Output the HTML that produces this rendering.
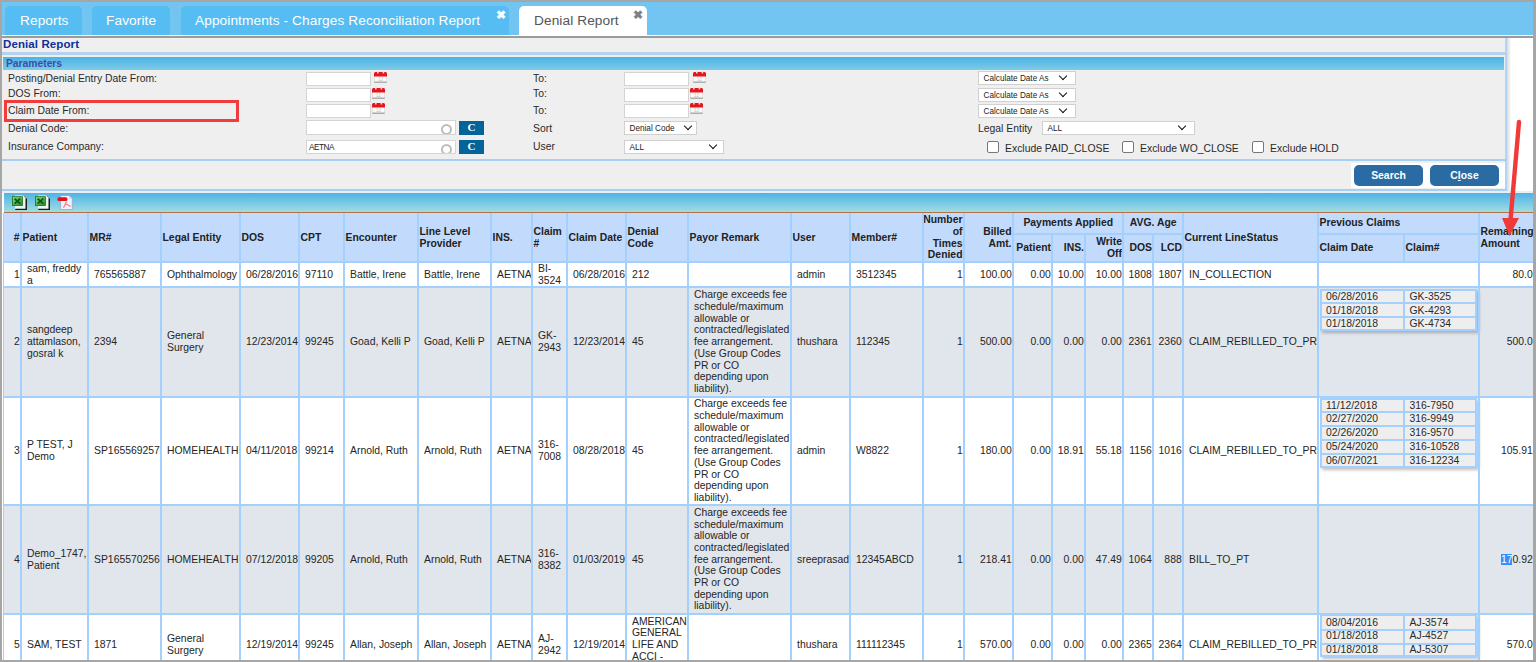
<!DOCTYPE html><html><head><meta charset="utf-8"><style>

*{box-sizing:border-box;margin:0;padding:0}
html,body{width:1536px;height:662px;overflow:hidden;background:#fff}
body{position:relative;font-family:"Liberation Sans",sans-serif;font-size:10.4px;color:#252525}
.a{position:absolute}
.lbl{position:absolute;line-height:12px;white-space:nowrap;color:#2a2a2a}
.inp{position:absolute;background:#fff;border:1px solid #d4d4d4}
.sel{position:absolute;background:#fff;border:1px solid #d0d0d0;font-size:8.2px;color:#222;line-height:14px;padding-left:4.5px;white-space:nowrap}
.chev{position:absolute;top:1px;width:6px;height:6px;border-right:1.8px solid #111;border-bottom:1.8px solid #111;transform:rotate(45deg)}
.cal{position:absolute;width:13px;height:13px}
.cb{position:absolute;width:12px;height:12px;border:1px solid #777;border-radius:2px;background:#fff}
.cbtn{position:absolute;width:25px;height:14px;background:#03649a;color:#fff;font-weight:bold;font-family:'Liberation Serif',serif;font-size:11px;line-height:13.6px;text-align:center}
.circ{position:absolute;width:11px;height:11px;border:2px solid #bdbdbd;border-radius:50%}
.btn{position:absolute;height:21px;background:#2a6ba3;border-radius:5px;color:#fff;font-weight:bold;font-size:10.4px;line-height:21px;text-align:center}
.tab{position:absolute;top:6px;height:29px;background:#55bdf2;border-radius:5px 5px 0 0;color:#fff;font-size:13.7px;line-height:29px;white-space:nowrap;letter-spacing:0.08px}
.hl{position:absolute;background:#a3d0fd}
.c{position:absolute;display:flex;align-items:center;overflow:hidden;line-height:11.7px}
.c>span{display:block}
.hd{font-weight:bold;color:#222;padding-top:1px}
.nt{position:absolute;background:#eee}

</style></head><body>
<div class="a" style="left:0;top:0;width:1536px;height:2px;background:#a6a6a6"></div>
<div class="a" style="left:0;top:0;width:2px;height:662px;background:#a6a6a6"></div>
<div class="a" style="left:1533px;top:0;width:3px;height:662px;background:#a6a6a6"></div>
<div class="a" style="left:0;top:660px;width:1536px;height:2px;background:#a6a6a6"></div>
<div class="a" style="left:2px;top:2px;width:1531px;height:33px;background:#72c5f1"></div>
<div class="a" style="left:2px;top:35px;width:1531px;height:1px;background:#fff"></div>
<div class="a" style="left:2px;top:36px;width:1531px;height:2px;background:#9b9b9b"></div>
<div class="tab" style="left:5px;width:77px;"><span style="position:absolute;left:15px">Reports</span></div>
<div class="tab" style="left:92px;width:78px;"><span style="position:absolute;left:14px">Favorite</span></div>
<div class="tab" style="left:181px;width:328px;"><span style="position:absolute;left:14px">Appointments - Charges Reconciliation Report</span><span style="position:absolute;left:315px;top:-5.5px;font-size:12px;font-weight:bold">&#10006;</span></div>
<div class="tab" style="left:519px;width:128px;background:#fff;color:#555"><span style="position:absolute;left:15px">Denial Report</span><span style="position:absolute;left:114px;top:-5.5px;font-size:12px;font-weight:bold;color:#808080">&#10006;</span></div>
<div class="a" style="left:2px;top:38px;width:1505px;height:155px;background:#efefef"></div>
<div class="a" style="left:1505px;top:38px;width:2px;height:153px;background:#b3d5f5"></div>
<div class="a" style="left:1507px;top:38px;width:4px;height:153px;background:linear-gradient(to right,#d8d8d8,#fff)"></div>
<div class="lbl" style="left:3px;top:37px;font-size:11.5px;font-weight:bold;color:#102f98;line-height:14px;letter-spacing:0.1px">Denial Report</div>
<div class="a" style="left:2px;top:52px;width:1505px;height:3px;background:#b5d2ee"></div>
<div class="a" style="left:3px;top:57px;width:1501px;height:13px;background:linear-gradient(#4cb2e6,#7dcbe7)"></div>
<div class="lbl" style="left:6px;top:57.6px;font-size:10.3px;font-weight:bold;color:#3b4ea6;line-height:12px">Parameters</div>
<div class="lbl" style="left:8px;top:72.5px">Posting/Denial Entry Date From:</div>
<div class="lbl" style="left:8px;top:88.3px">DOS From:</div>
<div class="lbl" style="left:8px;top:104.5px">Claim Date From:</div>
<div class="lbl" style="left:8px;top:122.8px">Denial Code:</div>
<div class="lbl" style="left:8px;top:140.9px">Insurance Company:</div>
<div class="a" style="left:4px;top:100px;width:235px;height:22px;border:3px solid #f03c3c"></div>
<div class="inp" style="left:306px;top:72px;width:65px;height:14px"></div>
<svg class="cal" style="left:374px;top:70.5px" width="13" height="12" viewBox="0 0 13 12"><rect x="0.3" y="3.5" width="12.4" height="7.5" fill="#fafafa" stroke="#d6d6d6" stroke-width="0.6"/><rect x="0.3" y="10" width="12.4" height="1.4" fill="#a8a8a8"/><path d="M0 5V2a1.5 1.5 0 0 1 1.5-1.5h10A1.5 1.5 0 0 1 13 2v3z" fill="#e4161c"/><rect x="3" y="0" width="1.6" height="2" fill="#f2d0d0"/><rect x="8.6" y="0" width="1.6" height="2" fill="#f2d0d0"/><text x="6.5" y="9.3" font-size="4.6" text-anchor="middle" fill="#c4c4c4" font-family="Liberation Sans">12</text></svg>
<div class="inp" style="left:306px;top:88px;width:65px;height:13.5px"></div>
<svg class="cal" style="left:372px;top:86.5px" width="13" height="12" viewBox="0 0 13 12"><rect x="0.3" y="3.5" width="12.4" height="7.5" fill="#fafafa" stroke="#d6d6d6" stroke-width="0.6"/><rect x="0.3" y="10" width="12.4" height="1.4" fill="#a8a8a8"/><path d="M0 5V2a1.5 1.5 0 0 1 1.5-1.5h10A1.5 1.5 0 0 1 13 2v3z" fill="#e4161c"/><rect x="3" y="0" width="1.6" height="2" fill="#f2d0d0"/><rect x="8.6" y="0" width="1.6" height="2" fill="#f2d0d0"/><text x="6.5" y="9.3" font-size="4.6" text-anchor="middle" fill="#c4c4c4" font-family="Liberation Sans">12</text></svg>
<div class="inp" style="left:306px;top:104px;width:65px;height:13.5px"></div>
<svg class="cal" style="left:372px;top:102px" width="13" height="12" viewBox="0 0 13 12"><rect x="0.3" y="3.5" width="12.4" height="7.5" fill="#fafafa" stroke="#d6d6d6" stroke-width="0.6"/><rect x="0.3" y="10" width="12.4" height="1.4" fill="#a8a8a8"/><path d="M0 5V2a1.5 1.5 0 0 1 1.5-1.5h10A1.5 1.5 0 0 1 13 2v3z" fill="#e4161c"/><rect x="3" y="0" width="1.6" height="2" fill="#f2d0d0"/><rect x="8.6" y="0" width="1.6" height="2" fill="#f2d0d0"/><text x="6.5" y="9.3" font-size="4.6" text-anchor="middle" fill="#c4c4c4" font-family="Liberation Sans">12</text></svg>
<div class="inp" style="left:306px;top:120px;width:150px;height:15px;overflow:hidden"><div class="circ" style="left:134px;top:3.2px"></div></div>
<div class="cbtn" style="left:459px;top:121px">C</div>
<div class="inp" style="left:306px;top:140px;width:150px;height:14px;overflow:hidden"><div class="circ" style="left:134px;top:3.2px"></div></div>
<div class="lbl" style="left:309px;top:141.5px;font-size:8.2px;color:#222;letter-spacing:-0.45px">AETNA</div>
<div class="cbtn" style="left:459px;top:140px">C</div>
<div class="lbl" style="left:533px;top:72.5px">To:</div>
<div class="lbl" style="left:533px;top:88.3px">To:</div>
<div class="lbl" style="left:533px;top:104.5px">To:</div>
<div class="lbl" style="left:533px;top:122.8px">Sort</div>
<div class="lbl" style="left:533px;top:140.9px">User</div>
<div class="inp" style="left:624px;top:72px;width:65px;height:14px"></div>
<svg class="cal" style="left:693px;top:70.5px" width="13" height="12" viewBox="0 0 13 12"><rect x="0.3" y="3.5" width="12.4" height="7.5" fill="#fafafa" stroke="#d6d6d6" stroke-width="0.6"/><rect x="0.3" y="10" width="12.4" height="1.4" fill="#a8a8a8"/><path d="M0 5V2a1.5 1.5 0 0 1 1.5-1.5h10A1.5 1.5 0 0 1 13 2v3z" fill="#e4161c"/><rect x="3" y="0" width="1.6" height="2" fill="#f2d0d0"/><rect x="8.6" y="0" width="1.6" height="2" fill="#f2d0d0"/><text x="6.5" y="9.3" font-size="4.6" text-anchor="middle" fill="#c4c4c4" font-family="Liberation Sans">12</text></svg>
<div class="inp" style="left:624px;top:88px;width:65px;height:13.5px"></div>
<svg class="cal" style="left:689.5px;top:86.5px" width="13" height="12" viewBox="0 0 13 12"><rect x="0.3" y="3.5" width="12.4" height="7.5" fill="#fafafa" stroke="#d6d6d6" stroke-width="0.6"/><rect x="0.3" y="10" width="12.4" height="1.4" fill="#a8a8a8"/><path d="M0 5V2a1.5 1.5 0 0 1 1.5-1.5h10A1.5 1.5 0 0 1 13 2v3z" fill="#e4161c"/><rect x="3" y="0" width="1.6" height="2" fill="#f2d0d0"/><rect x="8.6" y="0" width="1.6" height="2" fill="#f2d0d0"/><text x="6.5" y="9.3" font-size="4.6" text-anchor="middle" fill="#c4c4c4" font-family="Liberation Sans">12</text></svg>
<div class="inp" style="left:624px;top:104px;width:65px;height:13.5px"></div>
<svg class="cal" style="left:689.5px;top:102px" width="13" height="12" viewBox="0 0 13 12"><rect x="0.3" y="3.5" width="12.4" height="7.5" fill="#fafafa" stroke="#d6d6d6" stroke-width="0.6"/><rect x="0.3" y="10" width="12.4" height="1.4" fill="#a8a8a8"/><path d="M0 5V2a1.5 1.5 0 0 1 1.5-1.5h10A1.5 1.5 0 0 1 13 2v3z" fill="#e4161c"/><rect x="3" y="0" width="1.6" height="2" fill="#f2d0d0"/><rect x="8.6" y="0" width="1.6" height="2" fill="#f2d0d0"/><text x="6.5" y="9.3" font-size="4.6" text-anchor="middle" fill="#c4c4c4" font-family="Liberation Sans">12</text></svg>
<div class="sel" style="left:624px;top:121px;width:73px;height:14px">Denial Code<div class="chev" style="left:60px"></div></div>
<div class="sel" style="left:624px;top:140px;width:100px;height:14px">ALL<div class="chev" style="left:85px"></div></div>
<div class="sel" style="left:978px;top:71px;width:98px;height:14px">Calculate Date As<div class="chev" style="left:81px"></div></div>
<div class="sel" style="left:978px;top:88px;width:98px;height:14px">Calculate Date As<div class="chev" style="left:81px"></div></div>
<div class="sel" style="left:978px;top:104px;width:98px;height:14px">Calculate Date As<div class="chev" style="left:81px"></div></div>
<div class="lbl" style="left:978px;top:122.8px">Legal Entity</div>
<div class="sel" style="left:1042px;top:121px;width:153px;height:14px">ALL<div class="chev" style="left:136px"></div></div>
<div class="cb" style="left:987px;top:141px"></div>
<div class="lbl" style="left:1005px;top:143.2px">Exclude PAID_CLOSE</div>
<div class="cb" style="left:1122px;top:141px"></div>
<div class="lbl" style="left:1140px;top:143.2px">Exclude WO_CLOSE</div>
<div class="cb" style="left:1252px;top:141px"></div>
<div class="lbl" style="left:1270px;top:143.2px">Exclude HOLD</div>
<div class="a" style="left:2px;top:159px;width:1505px;height:2px;background:#a5cff5"></div>
<div class="a" style="left:1351px;top:163px;width:154px;height:25px;background:#fff"></div>
<div class="btn" style="left:1354px;top:165px;width:69px">Search</div>
<div class="btn" style="left:1430px;top:165px;width:69px">C<u style="text-decoration-thickness:1px">l</u>ose</div>
<div class="a" style="left:2px;top:189px;width:1505px;height:2px;background:#a5cff5"></div>
<div class="a" style="left:2px;top:191px;width:1531px;height:2px;background:#e9eef4"></div>
<div class="a" style="left:4px;top:193px;width:1529px;height:19px;background:linear-gradient(#4fb3e7,#a0dde0)"></div>
<div class="a" style="left:4px;top:212px;width:1529px;height:1px;background:#b46f45"></div>
<svg class="a" style="left:12px;top:194.5px" width="15" height="15" viewBox="0 0 15 15"><defs><linearGradient id="gx" x1="0" y1="0" x2="1" y2="1"><stop offset="0" stop-color="#8de08a"/><stop offset="1" stop-color="#1b8a26"/></linearGradient></defs><path d="M3 0.5h8.5l3 3v11H3z" fill="#eef5ea"/><path d="M14.3 3.3v11.2H3.2" fill="none" stroke="#1d1d1d" stroke-width="1.6"/><path d="M11.5 0.5l3 3" stroke="#777" stroke-width="0.8"/><rect x="0.4" y="1.7" width="10" height="8.8" fill="url(#gx)" stroke="#17701c" stroke-width="0.8"/><path d="M2.6 3.6l5.6 5M8.2 3.6l-5.6 5" stroke="#0b5a10" stroke-width="1.9"/></svg>
<svg class="a" style="left:35px;top:194.5px" width="15" height="15" viewBox="0 0 15 15"><defs><linearGradient id="gx" x1="0" y1="0" x2="1" y2="1"><stop offset="0" stop-color="#8de08a"/><stop offset="1" stop-color="#1b8a26"/></linearGradient></defs><path d="M3 0.5h8.5l3 3v11H3z" fill="#eef5ea"/><path d="M14.3 3.3v11.2H3.2" fill="none" stroke="#1d1d1d" stroke-width="1.6"/><path d="M11.5 0.5l3 3" stroke="#777" stroke-width="0.8"/><rect x="0.4" y="1.7" width="10" height="8.8" fill="url(#gx)" stroke="#17701c" stroke-width="0.8"/><path d="M2.6 3.6l5.6 5M8.2 3.6l-5.6 5" stroke="#0b5a10" stroke-width="1.9"/></svg>
<svg class="a" style="left:57px;top:194.5px" width="16" height="15" viewBox="0 0 16 15"><path d="M3.6 0.5h8.9l2.8 2.8v11.2H3.6z" fill="#eef2fb" stroke="#93a6d4" stroke-width="0.8"/><path d="M12.5 0.5v2.8h2.8" fill="none" stroke="#b0bde0" stroke-width="0.6"/><path d="M9.5 6.5L6.5 12.8M8.3 8.8l5.5 2.6" stroke="#f07a7a" stroke-width="1.1" fill="none"/><rect x="0.4" y="2.3" width="10" height="3.8" rx="1.6" fill="#e0121a"/></svg>
<div class="a" style="left:3px;top:213px;width:1530px;height:48px;background:#c2dbfd"></div>
<div class="a" style="left:3px;top:263px;width:1530px;height:23px;background:#fff"></div>
<div class="a" style="left:3px;top:288px;width:1530px;height:108px;background:#e1e5ec"></div>
<div class="a" style="left:3px;top:398px;width:1530px;height:106px;background:#fff"></div>
<div class="a" style="left:3px;top:506px;width:1530px;height:107px;background:#e1e5ec"></div>
<div class="a" style="left:3px;top:615px;width:1530px;height:60px;background:#fff"></div>
<div class="c hd" style="left:5px;top:213px;width:15px;height:48px;justify-content:flex-end;text-align:right;padding-left:0px;padding-right:0.5px;"><span>#</span></div>
<div class="c hd" style="left:22px;top:213px;width:65px;height:48px;justify-content:flex-start;text-align:left;padding-left:0.5px;padding-right:0.5px;"><span>Patient</span></div>
<div class="c hd" style="left:89px;top:213px;width:71px;height:48px;justify-content:flex-start;text-align:left;padding-left:0.5px;padding-right:0.5px;"><span>MR#</span></div>
<div class="c hd" style="left:162px;top:213px;width:77px;height:48px;justify-content:flex-start;text-align:left;padding-left:0.5px;padding-right:0.5px;"><span>Legal Entity</span></div>
<div class="c hd" style="left:241px;top:213px;width:57px;height:48px;justify-content:flex-start;text-align:left;padding-left:0.5px;padding-right:0.5px;"><span>DOS</span></div>
<div class="c hd" style="left:300px;top:213px;width:43px;height:48px;justify-content:flex-start;text-align:left;padding-left:0.5px;padding-right:0.5px;"><span>CPT</span></div>
<div class="c hd" style="left:345px;top:213px;width:72px;height:48px;justify-content:flex-start;text-align:left;padding-left:0.5px;padding-right:0.5px;"><span>Encounter</span></div>
<div class="c hd" style="left:419px;top:213px;width:71px;height:48px;justify-content:flex-start;text-align:left;padding-left:0.5px;padding-right:0.5px;"><span>Line Level<br>Provider</span></div>
<div class="c hd" style="left:492px;top:213px;width:39px;height:48px;justify-content:flex-start;text-align:left;padding-left:0.5px;padding-right:0.5px;"><span>INS.</span></div>
<div class="c hd" style="left:533px;top:213px;width:33px;height:48px;justify-content:flex-start;text-align:left;padding-left:0.5px;padding-right:0.5px;"><span>Claim<br>#</span></div>
<div class="c hd" style="left:568px;top:213px;width:57px;height:48px;justify-content:flex-start;text-align:left;padding-left:0.5px;padding-right:0.5px;"><span>Claim Date</span></div>
<div class="c hd" style="left:627px;top:213px;width:60px;height:48px;justify-content:flex-start;text-align:left;padding-left:0.5px;padding-right:0.5px;"><span>Denial<br>Code</span></div>
<div class="c hd" style="left:689px;top:213px;width:101px;height:48px;justify-content:flex-start;text-align:left;padding-left:0.5px;padding-right:0.5px;"><span>Payor Remark</span></div>
<div class="c hd" style="left:792px;top:213px;width:57px;height:48px;justify-content:flex-start;text-align:left;padding-left:0.5px;padding-right:0.5px;"><span>User</span></div>
<div class="c hd" style="left:851px;top:213px;width:71px;height:48px;justify-content:flex-start;text-align:left;padding-left:0.5px;padding-right:0.5px;"><span>Member#</span></div>
<div class="c hd" style="left:924px;top:213px;width:39px;height:48px;justify-content:flex-end;text-align:right;padding-left:0px;padding-right:0.5px;"><span>Number<br>of<br>Times<br>Denied</span></div>
<div class="c hd" style="left:965px;top:213px;width:47px;height:48px;justify-content:flex-end;text-align:right;padding-left:0px;padding-right:0.5px;"><span>Billed<br>Amt.</span></div>
<div class="c hd" style="left:1184px;top:213px;width:133px;height:48px;justify-content:flex-start;text-align:left;padding-left:0.5px;padding-right:0.5px;"><span>Current Line<span style="word-spacing:-2.6px"> </span>Status</span></div>
<div class="c hd" style="left:1480px;top:213px;width:60px;height:48px;justify-content:flex-start;text-align:left;padding-left:0.5px;padding-right:0.5px;"><span>Remaining<br>Amount</span></div>
<div class="c hd" style="left:1014px;top:213px;width:108px;height:20px;justify-content:center;text-align:center;padding-left:0.5px;padding-right:0px;padding-top:0.3px"><span>Payments Applied</span></div>
<div class="hl" style="left:1012px;top:233px;width:112px;height:2px"></div>
<div class="c hd" style="left:1124px;top:213px;width:58px;height:20px;justify-content:center;text-align:center;padding-left:0.5px;padding-right:0px;padding-top:0.3px"><span>AVG. Age</span></div>
<div class="hl" style="left:1122px;top:233px;width:62px;height:2px"></div>
<div class="c hd" style="left:1319px;top:213px;width:159px;height:20px;justify-content:flex-start;text-align:left;padding-left:0.5px;padding-right:0px;padding-top:0.3px"><span>Previous Claims</span></div>
<div class="hl" style="left:1317px;top:233px;width:163px;height:2px"></div>
<div class="c hd" style="left:1014px;top:235px;width:37px;height:26px;justify-content:flex-end;text-align:right;padding-left:0.5px;padding-right:0px;padding-top:0"><span>Patient</span></div>
<div class="c hd" style="left:1053px;top:235px;width:31px;height:26px;justify-content:flex-end;text-align:right;padding-left:0.5px;padding-right:0px;padding-top:0"><span>INS.</span></div>
<div class="c hd" style="left:1086px;top:235px;width:36px;height:26px;justify-content:flex-end;text-align:right;padding-left:0.5px;padding-right:0px;padding-top:0"><span>Write<br>Off</span></div>
<div class="c hd" style="left:1124px;top:235px;width:28px;height:26px;justify-content:flex-end;text-align:right;padding-left:0.5px;padding-right:0px;padding-top:0"><span>DOS</span></div>
<div class="c hd" style="left:1154px;top:235px;width:28px;height:26px;justify-content:flex-end;text-align:right;padding-left:0.5px;padding-right:0px;padding-top:0"><span>LCD</span></div>
<div class="c hd" style="left:1319px;top:235px;width:84px;height:26px;justify-content:flex-start;text-align:left;padding-left:0.5px;padding-right:0px;padding-top:0"><span>Claim Date</span></div>
<div class="c hd" style="left:1405px;top:235px;width:73px;height:26px;justify-content:flex-start;text-align:left;padding-left:0.5px;padding-right:0px;padding-top:0"><span>Claim#</span></div>
<div class="c " style="left:5px;top:263px;width:15px;height:23px;justify-content:flex-end;text-align:right;padding-left:0px;padding-right:0.3px;"><span>1</span></div>
<div class="c " style="left:22px;top:263px;width:65px;height:23px;justify-content:flex-start;text-align:left;padding-left:5px;padding-right:0.3px;"><span>sam, freddy<br>a</span></div>
<div class="c " style="left:89px;top:263px;width:71px;height:23px;justify-content:flex-start;text-align:left;padding-left:5px;padding-right:0.3px;"><span>765565887</span></div>
<div class="c " style="left:162px;top:263px;width:77px;height:23px;justify-content:flex-start;text-align:left;padding-left:5px;padding-right:0.3px;"><span>Ophthalmology</span></div>
<div class="c " style="left:241px;top:263px;width:57px;height:23px;justify-content:flex-start;text-align:left;padding-left:5px;padding-right:0.3px;"><span>06/28/2016</span></div>
<div class="c " style="left:300px;top:263px;width:43px;height:23px;justify-content:flex-start;text-align:left;padding-left:5px;padding-right:0.3px;"><span>97110</span></div>
<div class="c " style="left:345px;top:263px;width:72px;height:23px;justify-content:flex-start;text-align:left;padding-left:5px;padding-right:0.3px;"><span>Battle, Irene</span></div>
<div class="c " style="left:419px;top:263px;width:71px;height:23px;justify-content:flex-start;text-align:left;padding-left:5px;padding-right:0.3px;"><span>Battle, Irene</span></div>
<div class="c " style="left:492px;top:263px;width:39px;height:23px;justify-content:flex-start;text-align:left;padding-left:5px;padding-right:0.3px;"><span>AETNA</span></div>
<div class="c " style="left:533px;top:263px;width:33px;height:23px;justify-content:flex-start;text-align:left;padding-left:5px;padding-right:0.3px;"><span>BI-<br>3524</span></div>
<div class="c " style="left:568px;top:263px;width:57px;height:23px;justify-content:flex-start;text-align:left;padding-left:5px;padding-right:0.3px;"><span>06/28/2016</span></div>
<div class="c " style="left:627px;top:263px;width:60px;height:23px;justify-content:flex-start;text-align:left;padding-left:5px;padding-right:0.3px;"><span>212</span></div>
<div class="c " style="left:792px;top:263px;width:57px;height:23px;justify-content:flex-start;text-align:left;padding-left:5px;padding-right:0.3px;"><span>admin</span></div>
<div class="c " style="left:851px;top:263px;width:71px;height:23px;justify-content:flex-start;text-align:left;padding-left:5px;padding-right:0.3px;"><span>3512345</span></div>
<div class="c " style="left:924px;top:263px;width:39px;height:23px;justify-content:flex-end;text-align:right;padding-left:0px;padding-right:0.3px;"><span>1</span></div>
<div class="c " style="left:965px;top:263px;width:47px;height:23px;justify-content:flex-end;text-align:right;padding-left:0px;padding-right:0.3px;"><span>100.00</span></div>
<div class="c " style="left:1014px;top:263px;width:37px;height:23px;justify-content:flex-end;text-align:right;padding-left:0px;padding-right:0.3px;"><span>0.00</span></div>
<div class="c " style="left:1053px;top:263px;width:31px;height:23px;justify-content:flex-end;text-align:right;padding-left:0px;padding-right:0.3px;"><span>10.00</span></div>
<div class="c " style="left:1086px;top:263px;width:36px;height:23px;justify-content:flex-end;text-align:right;padding-left:0px;padding-right:0.3px;"><span>10.00</span></div>
<div class="c " style="left:1124px;top:263px;width:28px;height:23px;justify-content:flex-end;text-align:right;padding-left:0px;padding-right:0.3px;"><span>1808</span></div>
<div class="c " style="left:1154px;top:263px;width:28px;height:23px;justify-content:flex-end;text-align:right;padding-left:0px;padding-right:0.3px;"><span>1807</span></div>
<div class="c " style="left:1184px;top:263px;width:133px;height:23px;justify-content:flex-start;text-align:left;padding-left:5px;padding-right:0.3px;"><span>IN_COLLECTION</span></div>
<div class="c " style="left:1480px;top:263px;width:53px;height:23px;justify-content:flex-end;text-align:right;padding-left:0px;padding-right:0.3px;"><span>80.0</span></div>
<div class="c " style="left:5px;top:288px;width:15px;height:108px;justify-content:flex-end;text-align:right;padding-left:0px;padding-right:0.3px;"><span>2</span></div>
<div class="c " style="left:22px;top:288px;width:65px;height:108px;justify-content:flex-start;text-align:left;padding-left:5px;padding-right:0.3px;"><span>sangdeep<br>attamlason,<br>gosral k</span></div>
<div class="c " style="left:89px;top:288px;width:71px;height:108px;justify-content:flex-start;text-align:left;padding-left:5px;padding-right:0.3px;"><span>2394</span></div>
<div class="c " style="left:162px;top:288px;width:77px;height:108px;justify-content:flex-start;text-align:left;padding-left:5px;padding-right:0.3px;"><span>General<br>Surgery</span></div>
<div class="c " style="left:241px;top:288px;width:57px;height:108px;justify-content:flex-start;text-align:left;padding-left:5px;padding-right:0.3px;"><span>12/23/2014</span></div>
<div class="c " style="left:300px;top:288px;width:43px;height:108px;justify-content:flex-start;text-align:left;padding-left:5px;padding-right:0.3px;"><span>99245</span></div>
<div class="c " style="left:345px;top:288px;width:72px;height:108px;justify-content:flex-start;text-align:left;padding-left:5px;padding-right:0.3px;"><span>Goad, Kelli P</span></div>
<div class="c " style="left:419px;top:288px;width:71px;height:108px;justify-content:flex-start;text-align:left;padding-left:5px;padding-right:0.3px;"><span>Goad, Kelli P</span></div>
<div class="c " style="left:492px;top:288px;width:39px;height:108px;justify-content:flex-start;text-align:left;padding-left:5px;padding-right:0.3px;"><span>AETNA</span></div>
<div class="c " style="left:533px;top:288px;width:33px;height:108px;justify-content:flex-start;text-align:left;padding-left:5px;padding-right:0.3px;"><span>GK-<br>2943</span></div>
<div class="c " style="left:568px;top:288px;width:57px;height:108px;justify-content:flex-start;text-align:left;padding-left:5px;padding-right:0.3px;"><span>12/23/2014</span></div>
<div class="c " style="left:627px;top:288px;width:60px;height:108px;justify-content:flex-start;text-align:left;padding-left:5px;padding-right:0.3px;"><span>45</span></div>
<div class="c " style="left:689px;top:288px;width:101px;height:108px;justify-content:flex-start;text-align:left;padding-left:5px;padding-right:0.3px;"><span>Charge exceeds fee<br>schedule/maximum<br>allowable or<br>contracted/legislated<br>fee arrangement.<br>(Use Group Codes<br>PR or CO<br>depending upon<br>liability).</span></div>
<div class="c " style="left:792px;top:288px;width:57px;height:108px;justify-content:flex-start;text-align:left;padding-left:5px;padding-right:0.3px;"><span>thushara</span></div>
<div class="c " style="left:851px;top:288px;width:71px;height:108px;justify-content:flex-start;text-align:left;padding-left:5px;padding-right:0.3px;"><span>112345</span></div>
<div class="c " style="left:924px;top:288px;width:39px;height:108px;justify-content:flex-end;text-align:right;padding-left:0px;padding-right:0.3px;"><span>1</span></div>
<div class="c " style="left:965px;top:288px;width:47px;height:108px;justify-content:flex-end;text-align:right;padding-left:0px;padding-right:0.3px;"><span>500.00</span></div>
<div class="c " style="left:1014px;top:288px;width:37px;height:108px;justify-content:flex-end;text-align:right;padding-left:0px;padding-right:0.3px;"><span>0.00</span></div>
<div class="c " style="left:1053px;top:288px;width:31px;height:108px;justify-content:flex-end;text-align:right;padding-left:0px;padding-right:0.3px;"><span>0.00</span></div>
<div class="c " style="left:1086px;top:288px;width:36px;height:108px;justify-content:flex-end;text-align:right;padding-left:0px;padding-right:0.3px;"><span>0.00</span></div>
<div class="c " style="left:1124px;top:288px;width:28px;height:108px;justify-content:flex-end;text-align:right;padding-left:0px;padding-right:0.3px;"><span>2361</span></div>
<div class="c " style="left:1154px;top:288px;width:28px;height:108px;justify-content:flex-end;text-align:right;padding-left:0px;padding-right:0.3px;"><span>2360</span></div>
<div class="c " style="left:1184px;top:288px;width:133px;height:108px;justify-content:flex-start;text-align:left;padding-left:5px;padding-right:0.3px;"><span>CLAIM_REBILLED_TO_PR</span></div>
<div class="c " style="left:1480px;top:288px;width:53px;height:108px;justify-content:flex-end;text-align:right;padding-left:0px;padding-right:0.3px;"><span>500.0</span></div>
<div class="a" style="left:1320px;top:289px;width:157px;height:41.60000000000002px;background:#eee;border:2px solid #a3d0fd;box-shadow:2px 2px 3px rgba(0,0,0,0.25)"></div>
<div class="a" style="left:1403px;top:289px;width:2px;height:41.60000000000002px;background:#a3d0fd"></div>
<div class="a" style="left:1320px;top:302.4px;width:157px;height:2px;background:#a3d0fd"></div>
<div class="a" style="left:1320px;top:316px;width:157px;height:2px;background:#a3d0fd"></div>
<div class="lbl" style="left:1326px;top:291.1px;line-height:12px">06/28/2016</div>
<div class="lbl" style="left:1409.5px;top:291.1px;line-height:12px">GK-3525</div>
<div class="lbl" style="left:1326px;top:304.6px;line-height:12px">01/18/2018</div>
<div class="lbl" style="left:1409.5px;top:304.6px;line-height:12px">GK-4293</div>
<div class="lbl" style="left:1326px;top:318.1px;line-height:12px">01/18/2018</div>
<div class="lbl" style="left:1409.5px;top:318.1px;line-height:12px">GK-4734</div>
<div class="c " style="left:5px;top:398px;width:15px;height:106px;justify-content:flex-end;text-align:right;padding-left:0px;padding-right:0.3px;"><span>3</span></div>
<div class="c " style="left:22px;top:398px;width:65px;height:106px;justify-content:flex-start;text-align:left;padding-left:5px;padding-right:0.3px;"><span>P TEST, J<br>Demo</span></div>
<div class="c " style="left:89px;top:398px;width:71px;height:106px;justify-content:flex-start;text-align:left;padding-left:5px;padding-right:0.3px;"><span>SP165569257</span></div>
<div class="c " style="left:162px;top:398px;width:77px;height:106px;justify-content:flex-start;text-align:left;padding-left:5px;padding-right:0.3px;"><span>HOMEHEALTH</span></div>
<div class="c " style="left:241px;top:398px;width:57px;height:106px;justify-content:flex-start;text-align:left;padding-left:5px;padding-right:0.3px;"><span>04/11/2018</span></div>
<div class="c " style="left:300px;top:398px;width:43px;height:106px;justify-content:flex-start;text-align:left;padding-left:5px;padding-right:0.3px;"><span>99214</span></div>
<div class="c " style="left:345px;top:398px;width:72px;height:106px;justify-content:flex-start;text-align:left;padding-left:5px;padding-right:0.3px;"><span>Arnold, Ruth</span></div>
<div class="c " style="left:419px;top:398px;width:71px;height:106px;justify-content:flex-start;text-align:left;padding-left:5px;padding-right:0.3px;"><span>Arnold, Ruth</span></div>
<div class="c " style="left:492px;top:398px;width:39px;height:106px;justify-content:flex-start;text-align:left;padding-left:5px;padding-right:0.3px;"><span>AETNA</span></div>
<div class="c " style="left:533px;top:398px;width:33px;height:106px;justify-content:flex-start;text-align:left;padding-left:5px;padding-right:0.3px;"><span>316-<br>7008</span></div>
<div class="c " style="left:568px;top:398px;width:57px;height:106px;justify-content:flex-start;text-align:left;padding-left:5px;padding-right:0.3px;"><span>08/28/2018</span></div>
<div class="c " style="left:627px;top:398px;width:60px;height:106px;justify-content:flex-start;text-align:left;padding-left:5px;padding-right:0.3px;"><span>45</span></div>
<div class="c " style="left:689px;top:398px;width:101px;height:106px;justify-content:flex-start;text-align:left;padding-left:5px;padding-right:0.3px;"><span>Charge exceeds fee<br>schedule/maximum<br>allowable or<br>contracted/legislated<br>fee arrangement.<br>(Use Group Codes<br>PR or CO<br>depending upon<br>liability).</span></div>
<div class="c " style="left:792px;top:398px;width:57px;height:106px;justify-content:flex-start;text-align:left;padding-left:5px;padding-right:0.3px;"><span>admin</span></div>
<div class="c " style="left:851px;top:398px;width:71px;height:106px;justify-content:flex-start;text-align:left;padding-left:5px;padding-right:0.3px;"><span>W8822</span></div>
<div class="c " style="left:924px;top:398px;width:39px;height:106px;justify-content:flex-end;text-align:right;padding-left:0px;padding-right:0.3px;"><span>1</span></div>
<div class="c " style="left:965px;top:398px;width:47px;height:106px;justify-content:flex-end;text-align:right;padding-left:0px;padding-right:0.3px;"><span>180.00</span></div>
<div class="c " style="left:1014px;top:398px;width:37px;height:106px;justify-content:flex-end;text-align:right;padding-left:0px;padding-right:0.3px;"><span>0.00</span></div>
<div class="c " style="left:1053px;top:398px;width:31px;height:106px;justify-content:flex-end;text-align:right;padding-left:0px;padding-right:0.3px;"><span>18.91</span></div>
<div class="c " style="left:1086px;top:398px;width:36px;height:106px;justify-content:flex-end;text-align:right;padding-left:0px;padding-right:0.3px;"><span>55.18</span></div>
<div class="c " style="left:1124px;top:398px;width:28px;height:106px;justify-content:flex-end;text-align:right;padding-left:0px;padding-right:0.3px;"><span>1156</span></div>
<div class="c " style="left:1154px;top:398px;width:28px;height:106px;justify-content:flex-end;text-align:right;padding-left:0px;padding-right:0.3px;"><span>1016</span></div>
<div class="c " style="left:1184px;top:398px;width:133px;height:106px;justify-content:flex-start;text-align:left;padding-left:5px;padding-right:0.3px;"><span>CLAIM_REBILLED_TO_PR</span></div>
<div class="c " style="left:1480px;top:398px;width:53px;height:106px;justify-content:flex-end;text-align:right;padding-left:0px;padding-right:0.3px;"><span>105.91</span></div>
<div class="a" style="left:1320px;top:398px;width:157px;height:70px;background:#eee;border:2px solid #a3d0fd;box-shadow:2px 2px 3px rgba(0,0,0,0.25)"></div>
<div class="a" style="left:1403px;top:398px;width:2px;height:70px;background:#a3d0fd"></div>
<div class="a" style="left:1320px;top:411px;width:157px;height:2px;background:#a3d0fd"></div>
<div class="a" style="left:1320px;top:424.6px;width:157px;height:2px;background:#a3d0fd"></div>
<div class="a" style="left:1320px;top:439.2px;width:157px;height:2px;background:#a3d0fd"></div>
<div class="a" style="left:1320px;top:452.8px;width:157px;height:2px;background:#a3d0fd"></div>
<div class="lbl" style="left:1326px;top:399.6px;line-height:12px">11/12/2018</div>
<div class="lbl" style="left:1409.5px;top:399.6px;line-height:12px">316-7950</div>
<div class="lbl" style="left:1326px;top:413.2px;line-height:12px">02/27/2020</div>
<div class="lbl" style="left:1409.5px;top:413.2px;line-height:12px">316-9949</div>
<div class="lbl" style="left:1326px;top:426.8px;line-height:12px">02/26/2020</div>
<div class="lbl" style="left:1409.5px;top:426.8px;line-height:12px">316-9570</div>
<div class="lbl" style="left:1326px;top:441.1px;line-height:12px">05/24/2020</div>
<div class="lbl" style="left:1409.5px;top:441.1px;line-height:12px">316-10528</div>
<div class="lbl" style="left:1326px;top:454.7px;line-height:12px">06/07/2021</div>
<div class="lbl" style="left:1409.5px;top:454.7px;line-height:12px">316-12234</div>
<div class="c " style="left:5px;top:506px;width:15px;height:107px;justify-content:flex-end;text-align:right;padding-left:0px;padding-right:0.3px;"><span>4</span></div>
<div class="c " style="left:22px;top:506px;width:65px;height:107px;justify-content:flex-start;text-align:left;padding-left:5px;padding-right:0.3px;"><span>Demo_1747,<br>Patient</span></div>
<div class="c " style="left:89px;top:506px;width:71px;height:107px;justify-content:flex-start;text-align:left;padding-left:5px;padding-right:0.3px;"><span>SP165570256</span></div>
<div class="c " style="left:162px;top:506px;width:77px;height:107px;justify-content:flex-start;text-align:left;padding-left:5px;padding-right:0.3px;"><span>HOMEHEALTH</span></div>
<div class="c " style="left:241px;top:506px;width:57px;height:107px;justify-content:flex-start;text-align:left;padding-left:5px;padding-right:0.3px;"><span>07/12/2018</span></div>
<div class="c " style="left:300px;top:506px;width:43px;height:107px;justify-content:flex-start;text-align:left;padding-left:5px;padding-right:0.3px;"><span>99205</span></div>
<div class="c " style="left:345px;top:506px;width:72px;height:107px;justify-content:flex-start;text-align:left;padding-left:5px;padding-right:0.3px;"><span>Arnold, Ruth</span></div>
<div class="c " style="left:419px;top:506px;width:71px;height:107px;justify-content:flex-start;text-align:left;padding-left:5px;padding-right:0.3px;"><span>Arnold, Ruth</span></div>
<div class="c " style="left:492px;top:506px;width:39px;height:107px;justify-content:flex-start;text-align:left;padding-left:5px;padding-right:0.3px;"><span>AETNA</span></div>
<div class="c " style="left:533px;top:506px;width:33px;height:107px;justify-content:flex-start;text-align:left;padding-left:5px;padding-right:0.3px;"><span>316-<br>8382</span></div>
<div class="c " style="left:568px;top:506px;width:57px;height:107px;justify-content:flex-start;text-align:left;padding-left:5px;padding-right:0.3px;"><span>01/03/2019</span></div>
<div class="c " style="left:627px;top:506px;width:60px;height:107px;justify-content:flex-start;text-align:left;padding-left:5px;padding-right:0.3px;"><span>45</span></div>
<div class="c " style="left:689px;top:506px;width:101px;height:107px;justify-content:flex-start;text-align:left;padding-left:5px;padding-right:0.3px;"><span>Charge exceeds fee<br>schedule/maximum<br>allowable or<br>contracted/legislated<br>fee arrangement.<br>(Use Group Codes<br>PR or CO<br>depending upon<br>liability).</span></div>
<div class="c " style="left:792px;top:506px;width:57px;height:107px;justify-content:flex-start;text-align:left;padding-left:5px;padding-right:0.3px;"><span>sreeprasad</span></div>
<div class="c " style="left:851px;top:506px;width:71px;height:107px;justify-content:flex-start;text-align:left;padding-left:5px;padding-right:0.3px;"><span>12345ABCD</span></div>
<div class="c " style="left:924px;top:506px;width:39px;height:107px;justify-content:flex-end;text-align:right;padding-left:0px;padding-right:0.3px;"><span>1</span></div>
<div class="c " style="left:965px;top:506px;width:47px;height:107px;justify-content:flex-end;text-align:right;padding-left:0px;padding-right:0.3px;"><span>218.41</span></div>
<div class="c " style="left:1014px;top:506px;width:37px;height:107px;justify-content:flex-end;text-align:right;padding-left:0px;padding-right:0.3px;"><span>0.00</span></div>
<div class="c " style="left:1053px;top:506px;width:31px;height:107px;justify-content:flex-end;text-align:right;padding-left:0px;padding-right:0.3px;"><span>0.00</span></div>
<div class="c " style="left:1086px;top:506px;width:36px;height:107px;justify-content:flex-end;text-align:right;padding-left:0px;padding-right:0.3px;"><span>47.49</span></div>
<div class="c " style="left:1124px;top:506px;width:28px;height:107px;justify-content:flex-end;text-align:right;padding-left:0px;padding-right:0.3px;"><span>1064</span></div>
<div class="c " style="left:1154px;top:506px;width:28px;height:107px;justify-content:flex-end;text-align:right;padding-left:0px;padding-right:0.3px;"><span>888</span></div>
<div class="c " style="left:1184px;top:506px;width:133px;height:107px;justify-content:flex-start;text-align:left;padding-left:5px;padding-right:0.3px;"><span>BILL_TO_PT</span></div>
<div class="c " style="left:1480px;top:506px;width:53px;height:107px;justify-content:flex-end;text-align:right;padding-left:0px;padding-right:0.3px;"><span><span style="background:#3390ff;color:#fff">17</span>0.92</span></div>
<div class="c " style="left:5px;top:615px;width:15px;height:60px;justify-content:flex-end;text-align:right;padding-left:0px;padding-right:0.3px;"><span>5</span></div>
<div class="c " style="left:22px;top:615px;width:65px;height:60px;justify-content:flex-start;text-align:left;padding-left:5px;padding-right:0.3px;"><span>SAM, TEST</span></div>
<div class="c " style="left:89px;top:615px;width:71px;height:60px;justify-content:flex-start;text-align:left;padding-left:5px;padding-right:0.3px;"><span>1871</span></div>
<div class="c " style="left:162px;top:615px;width:77px;height:60px;justify-content:flex-start;text-align:left;padding-left:5px;padding-right:0.3px;"><span>General<br>Surgery</span></div>
<div class="c " style="left:241px;top:615px;width:57px;height:60px;justify-content:flex-start;text-align:left;padding-left:5px;padding-right:0.3px;"><span>12/19/2014</span></div>
<div class="c " style="left:300px;top:615px;width:43px;height:60px;justify-content:flex-start;text-align:left;padding-left:5px;padding-right:0.3px;"><span>99245</span></div>
<div class="c " style="left:345px;top:615px;width:72px;height:60px;justify-content:flex-start;text-align:left;padding-left:5px;padding-right:0.3px;"><span>Allan, Joseph</span></div>
<div class="c " style="left:419px;top:615px;width:71px;height:60px;justify-content:flex-start;text-align:left;padding-left:5px;padding-right:0.3px;"><span>Allan, Joseph</span></div>
<div class="c " style="left:492px;top:615px;width:39px;height:60px;justify-content:flex-start;text-align:left;padding-left:5px;padding-right:0.3px;"><span>AETNA</span></div>
<div class="c " style="left:533px;top:615px;width:33px;height:60px;justify-content:flex-start;text-align:left;padding-left:5px;padding-right:0.3px;"><span>AJ-<br>2942</span></div>
<div class="c " style="left:568px;top:615px;width:57px;height:60px;justify-content:flex-start;text-align:left;padding-left:5px;padding-right:0.3px;"><span>12/19/2014</span></div>
<div class="c " style="left:627px;top:615px;width:60px;height:60px;justify-content:flex-start;text-align:left;padding-left:5px;padding-right:0.3px;"><span>AMERICAN<br>GENERAL<br>LIFE AND<br>ACCI -<br>DENT</span></div>
<div class="c " style="left:792px;top:615px;width:57px;height:60px;justify-content:flex-start;text-align:left;padding-left:5px;padding-right:0.3px;"><span>thushara</span></div>
<div class="c " style="left:851px;top:615px;width:71px;height:60px;justify-content:flex-start;text-align:left;padding-left:5px;padding-right:0.3px;"><span>111112345</span></div>
<div class="c " style="left:924px;top:615px;width:39px;height:60px;justify-content:flex-end;text-align:right;padding-left:0px;padding-right:0.3px;"><span>1</span></div>
<div class="c " style="left:965px;top:615px;width:47px;height:60px;justify-content:flex-end;text-align:right;padding-left:0px;padding-right:0.3px;"><span>570.00</span></div>
<div class="c " style="left:1014px;top:615px;width:37px;height:60px;justify-content:flex-end;text-align:right;padding-left:0px;padding-right:0.3px;"><span>0.00</span></div>
<div class="c " style="left:1053px;top:615px;width:31px;height:60px;justify-content:flex-end;text-align:right;padding-left:0px;padding-right:0.3px;"><span>0.00</span></div>
<div class="c " style="left:1086px;top:615px;width:36px;height:60px;justify-content:flex-end;text-align:right;padding-left:0px;padding-right:0.3px;"><span>0.00</span></div>
<div class="c " style="left:1124px;top:615px;width:28px;height:60px;justify-content:flex-end;text-align:right;padding-left:0px;padding-right:0.3px;"><span>2365</span></div>
<div class="c " style="left:1154px;top:615px;width:28px;height:60px;justify-content:flex-end;text-align:right;padding-left:0px;padding-right:0.3px;"><span>2364</span></div>
<div class="c " style="left:1184px;top:615px;width:133px;height:60px;justify-content:flex-start;text-align:left;padding-left:5px;padding-right:0.3px;"><span>CLAIM_REBILLED_TO_PR</span></div>
<div class="c " style="left:1480px;top:615px;width:53px;height:60px;justify-content:flex-end;text-align:right;padding-left:0px;padding-right:0.3px;"><span>570.0</span></div>
<div class="a" style="left:1320px;top:614px;width:157px;height:43.39999999999998px;background:#eee;border:2px solid #a3d0fd;box-shadow:2px 2px 3px rgba(0,0,0,0.25)"></div>
<div class="a" style="left:1403px;top:614px;width:2px;height:43.39999999999998px;background:#a3d0fd"></div>
<div class="a" style="left:1320px;top:628.7px;width:157px;height:2px;background:#a3d0fd"></div>
<div class="a" style="left:1320px;top:642.8px;width:157px;height:2px;background:#a3d0fd"></div>
<div class="lbl" style="left:1326px;top:616.5px;line-height:12px">08/04/2016</div>
<div class="lbl" style="left:1409.5px;top:616.5px;line-height:12px">AJ-3574</div>
<div class="lbl" style="left:1326px;top:630px;line-height:12px">01/18/2018</div>
<div class="lbl" style="left:1409.5px;top:630px;line-height:12px">AJ-4527</div>
<div class="lbl" style="left:1326px;top:643.5px;line-height:12px">01/18/2018</div>
<div class="lbl" style="left:1409.5px;top:643.5px;line-height:12px">AJ-5307</div>
<div class="hl" style="left:3px;top:213px;width:1px;height:449px"></div>
<div class="hl" style="left:20px;top:213px;width:2px;height:449px"></div>
<div class="hl" style="left:87px;top:213px;width:2px;height:449px"></div>
<div class="hl" style="left:160px;top:213px;width:2px;height:449px"></div>
<div class="hl" style="left:239px;top:213px;width:2px;height:449px"></div>
<div class="hl" style="left:298px;top:213px;width:2px;height:449px"></div>
<div class="hl" style="left:343px;top:213px;width:2px;height:449px"></div>
<div class="hl" style="left:417px;top:213px;width:2px;height:449px"></div>
<div class="hl" style="left:490px;top:213px;width:2px;height:449px"></div>
<div class="hl" style="left:531px;top:213px;width:2px;height:449px"></div>
<div class="hl" style="left:566px;top:213px;width:2px;height:449px"></div>
<div class="hl" style="left:625px;top:213px;width:2px;height:449px"></div>
<div class="hl" style="left:687px;top:213px;width:2px;height:449px"></div>
<div class="hl" style="left:790px;top:213px;width:2px;height:449px"></div>
<div class="hl" style="left:849px;top:213px;width:2px;height:449px"></div>
<div class="hl" style="left:922px;top:213px;width:2px;height:449px"></div>
<div class="hl" style="left:963px;top:213px;width:2px;height:449px"></div>
<div class="hl" style="left:1012px;top:213px;width:2px;height:449px"></div>
<div class="hl" style="left:1051px;top:233px;width:2px;height:429px"></div>
<div class="hl" style="left:1084px;top:233px;width:2px;height:429px"></div>
<div class="hl" style="left:1122px;top:213px;width:2px;height:449px"></div>
<div class="hl" style="left:1152px;top:233px;width:2px;height:429px"></div>
<div class="hl" style="left:1182px;top:213px;width:2px;height:449px"></div>
<div class="hl" style="left:1317px;top:213px;width:2px;height:449px"></div>
<div class="hl" style="left:1403px;top:233px;width:2px;height:28px"></div>
<div class="hl" style="left:1478px;top:213px;width:2px;height:449px"></div>
<div class="hl" style="left:3px;top:261px;width:1530px;height:2px"></div>
<div class="hl" style="left:3px;top:286px;width:1530px;height:2px"></div>
<div class="hl" style="left:3px;top:396px;width:1530px;height:2px"></div>
<div class="hl" style="left:3px;top:504px;width:1530px;height:2px"></div>
<div class="hl" style="left:3px;top:613px;width:1530px;height:2px"></div>
<svg class="a" style="left:1495px;top:110px" width="40" height="130" viewBox="0 0 40 130"><path d="M24 12 L15.5 110" stroke="#f03a3a" stroke-width="4.4" stroke-linecap="round" fill="none"/><path d="M7 108 L24 108 L14.5 126 Z" fill="#f03a3a"/></svg>
<div class="a" style="left:1533px;top:0;width:3px;height:662px;background:#a6a6a6"></div>
<div class="a" style="left:0;top:660px;width:1536px;height:2px;background:#a6a6a6"></div>
<div class="a" style="left:0;top:0;width:2px;height:662px;background:#a6a6a6"></div>
</body></html>
